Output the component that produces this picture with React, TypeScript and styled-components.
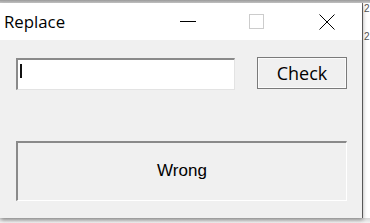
import React from "react";
import styled, { createGlobalStyle } from "styled-components";

const Global = createGlobalStyle`
  html, body { margin: 0; padding: 0; background: #ffffff; }
  body { width: 370px; height: 223px; overflow: hidden; }
`;

const Desktop = styled.div`
  display: flex;
  flex-direction: column;
  width: 370px;
  height: 223px;
  background: #ffffff;
  overflow: hidden;
`;

const TopStrip = styled.div`
  height: 3px;
  flex: none;
  background: linear-gradient(#9a9a9a, #c9c9c9);
`;

const Row = styled.div`
  display: flex;
  flex: none;
`;

const Window = styled.div`
  width: 362px;
  height: 215px;
  display: flex;
  flex-direction: column;
  background: #f0f0f0;
  box-shadow: 1px 2px 4px rgba(0, 0, 0, 0.35);
  position: relative;
  z-index: 1;
`;

const SideStrip = styled.div`
  flex: 1;
  display: flex;
  flex-direction: column;
  gap: 16px;
  overflow: hidden;
  border-left: 1px solid #6e6e6e;
`;

const SideText = styled.span`
  font-family: "Liberation Sans", sans-serif;
  font-size: 10px;
  color: #555;
  white-space: nowrap;
  margin-left: 1px;
  line-height: 12px;
`;

const TitleBar = styled.div`
  height: 37px;
  flex: none;
  background: #ffffff;
  display: flex;
  align-items: center;
`;

const Title = styled.span`
  font-family: "Open Sans", sans-serif;
  font-size: 16.8px;
  color: #000;
  margin-left: 4px;
  flex: 1;
  padding-bottom: 1px;
`;

const CaptionButton = styled.div<{ $w: number }>`
  width: ${(p) => p.$w}px;
  height: 37px;
  display: flex;
  align-items: center;
  justify-content: center;
`;

const Body = styled.div`
  flex: 1;
  display: flex;
  flex-direction: column;
  padding: 17px 15px 0 16px;
`;

const InputRow = styled.div`
  display: flex;
  align-items: flex-start;
  justify-content: space-between;
`;

const TextInput = styled.div`
  width: 219px;
  height: 32px;
  box-sizing: border-box;
  background: #ffffff;
  border-top: 2px solid #8a8a8a;
  border-left: 2px solid #8a8a8a;
  border-right: 1px solid #e3e3e3;
  border-bottom: 1px solid #e3e3e3;
  padding: 4px 0 0 2px;
  margin-top: 1px;
`;

const Caret = styled.div`
  width: 2px;
  height: 14px;
  background: #111;
`;

const Button = styled.div`
  width: 90px;
  height: 32px;
  box-sizing: border-box;
  border: 1px solid #7a7a7a;
  box-shadow: inset 0 0 0 1px #fbfbfb;
  background: #f0f0f0;
  display: flex;
  align-items: center;
  justify-content: center;
  font-family: "Open Sans", sans-serif;
  font-size: 18px;
  color: #000;
  padding-bottom: 1px;
`;

const ResultBox = styled.div`
  margin-top: 51px;
  width: 331px;
  height: 60px;
  box-sizing: border-box;
  border-top: 2px solid #8a8a8a;
  border-left: 2px solid #8a8a8a;
  border-right: 1px solid #ffffff;
  border-bottom: 1px solid #ffffff;
  display: flex;
  align-items: center;
  justify-content: center;
  font-family: "Liberation Sans", sans-serif;
  font-size: 17px;
  color: #000;
  padding-bottom: 1px;
`;

const BottomShadow = styled.div`
  flex: 1;
  background: linear-gradient(#d4d4d4, #f4f4f4);
`;

export default function App() {
  return (
    <Desktop>
      <Global />
      <TopStrip />
      <Row>
        <Window>
          <TitleBar>
            <Title>Replace</Title>
            <CaptionButton $w={65}>
              <svg width="16" height="2" viewBox="0 0 16 2">
                <rect x="0" y="0" width="16" height="1" fill="#000" />
              </svg>
            </CaptionButton>
            <CaptionButton $w={72}>
              <svg width="15" height="15" viewBox="0 0 15 15">
                <rect x="0.5" y="0.5" width="14" height="14" fill="none" stroke="#cccccc" />
              </svg>
            </CaptionButton>
            <CaptionButton $w={70}>
              <svg width="16" height="16" viewBox="0 0 16 16">
                <path d="M0.5 0.5 L15.5 15.5 M15.5 0.5 L0.5 15.5" stroke="#000" strokeWidth="1" />
              </svg>
            </CaptionButton>
          </TitleBar>
          <Body>
            <InputRow>
              <TextInput>
                <Caret />
              </TextInput>
              <Button>Check</Button>
            </InputRow>
            <ResultBox>Wrong</ResultBox>
          </Body>
        </Window>
        <SideStrip>
          <SideText>2</SideText>
          <SideText>2</SideText>
        </SideStrip>
      </Row>
      <BottomShadow />
    </Desktop>
  );
}
